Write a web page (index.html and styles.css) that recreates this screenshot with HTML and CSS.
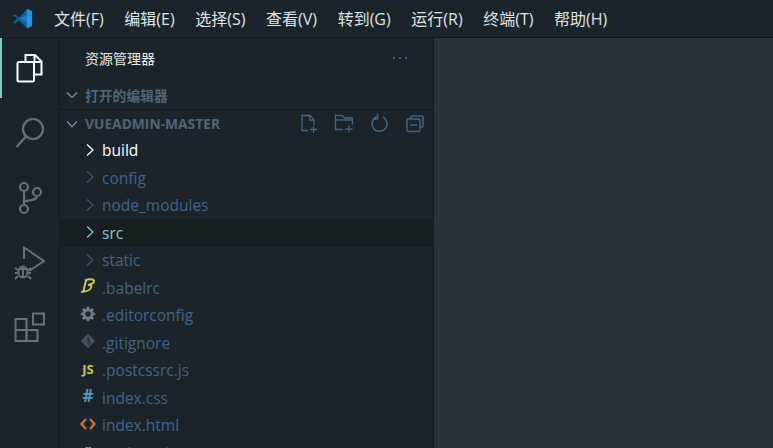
FILE: index.html
```html
<!DOCTYPE html>
<html lang="zh">
<head>
<meta charset="utf-8">
<title>VS Code</title>
<link rel="stylesheet" href="styles.css">
</head>
<body>
<header class="titlebar">
  <svg class="logo" viewBox="0 0 24 24" width="21" height="21">
    <path fill="#0065a9" d="M1.200 8.600 3 7l5 3.800L17.500.8l-.2 6.600-7 4.600 7 4.600.2 6.600L8 14.200l-5 3.800-1.800-1.600L5.800 12z"/>
    <path fill="#2489ca" d="M17 1.200 22.600 4v16L17 22.800z"/>
    <path fill="#1f9cf0" d="M17.500.8 23 3.500v17l-5.500 2.700V17L9.500 12l8-5z" opacity=".75"/>
  </svg>
  <nav class="menu">
    <span class="menu-item">文件(F)</span>
    <span class="menu-item">编辑(E)</span>
    <span class="menu-item">选择(S)</span>
    <span class="menu-item">查看(V)</span>
    <span class="menu-item">转到(G)</span>
    <span class="menu-item">运行(R)</span>
    <span class="menu-item">终端(T)</span>
    <span class="menu-item">帮助(H)</span>
  </nav>
</header>
<main class="workbench">
  <aside class="activity">
    <div class="act act-active">
      <svg viewBox="0 0 28 30" width="28" height="30" fill="none" stroke="#fff" stroke-width="2">
        <path d="M9.500 8V2h9.500l6.500 6.500V21.500H18"/>
        <path d="M18.500 2v7h7"/>
        <rect x="1.500" y="9" width="16.500" height="19.500" rx="1.500"/>
      </svg>
    </div>
    <div class="act">
      <svg viewBox="0 0 30 32" width="30" height="32" fill="none" stroke="#6a7074" stroke-width="2.200">
        <circle cx="18" cy="12" r="10"/>
        <path d="M11 19.500 1.500 30"/>
      </svg>
    </div>
    <div class="act">
      <svg viewBox="0 0 26 34" width="26" height="34" fill="none" stroke="#6a7074" stroke-width="2.200">
        <circle cx="7" cy="6" r="4"/>
        <circle cx="7" cy="28" r="4"/>
        <circle cx="20" cy="11" r="4"/>
        <path d="M7 10v14M7 22c0-4 13-1 13-7"/>
      </svg>
    </div>
    <div class="act">
      <svg viewBox="0 0 32 34" width="32" height="34" fill="none" stroke="#6a7074" stroke-width="2">
        <path d="M10 13V1.500L30 15 15 25"/>
        <ellipse cx="9" cy="26" rx="4.500" ry="5.500"/>
        <path d="M5 23h8M9 21v10M1 22l3 2M17 22l-3 2M1 27h3M14 27h3M1 33l3-3M17 33l-3-3"/>
      </svg>
    </div>
    <div class="act">
      <svg viewBox="0 0 32 32" width="32" height="32" fill="none" stroke="#6a7074" stroke-width="2">
        <rect x="1.500" y="7" width="11" height="11"/>
        <rect x="1.500" y="18" width="11" height="11"/>
        <rect x="12.500" y="18" width="11" height="11"/>
        <rect x="19" y="1.500" width="11" height="11"/>
      </svg>
    </div>
  </aside>
  <section class="sidebar">
    <div class="side-title">
      <span class="side-name">资源管理器</span>
      <svg class="more" viewBox="0 0 16 4" width="16" height="4"><path d="M1 1h2v2H1zM7 1h2v2H7zM13 1h2v2h-2z"/></svg>
    </div>
    <div class="sec sec-open">
      <svg class="chev" viewBox="0 0 16 16" width="16" height="16"><path d="M3 5.500 8 10.500 13 5.500" /></svg>
      <span>打开的编辑器</span>
    </div>
    <div class="sec sec-root">
      <svg class="chev" viewBox="0 0 16 16" width="16" height="16"><path d="M3 5.500 8 10.500 13 5.500" /></svg>
      <span class="root-name">VUEADMIN-MASTER</span>
      <div class="tools">
        <svg viewBox="0 0 20 20" width="20" height="20" fill="none" stroke="#41668a" stroke-width="1.300">
          <path d="M9 16.500H3V1.500h8l4 4V11M10.500 1.500V6H15M14.500 12v7M11 15.500h7"/>
        </svg>
        <svg viewBox="0 0 20 20" width="20" height="20" fill="none" stroke="#41668a" stroke-width="1.300">
          <path d="M9 15.500H1.500V1.500h7l2 2.500h8v6.500M1.500 6h17M15 11.500v7M11.500 15h7"/>
        </svg>
        <svg viewBox="0 0 20 20" width="20" height="20" fill="none" stroke="#41668a" stroke-width="1.500">
          <path d="M13 3.200a7.500 7.500 0 1 1-6.500-.2M7.500 0v5H3"/>
        </svg>
        <svg viewBox="0 0 20 20" width="20" height="20" fill="none" stroke="#41668a" stroke-width="1.500">
          <path d="M6 4.500V3a1 1 0 0 1 1-1h10a1 1 0 0 1 1 1v9a1 1 0 0 1-1 1h-2"/>
          <rect x="2" y="5" width="13" height="12.500" rx="1.500"/>
          <path d="M5 11h7"/>
        </svg>
      </div>
    </div>
    <ul class="tree">
      <li class="row row-white"><svg class="arrow" viewBox="0 0 10 14" width="10" height="14"><path d="M2 1.500 8 7 2 12.500"/></svg><span>build</span></li>
      <li class="row"><svg class="arrow" viewBox="0 0 10 14" width="10" height="14"><path d="M2 1.500 8 7 2 12.500"/></svg><span>config</span></li>
      <li class="row"><svg class="arrow" viewBox="0 0 10 14" width="10" height="14"><path d="M2 1.500 8 7 2 12.500"/></svg><span>node_modules</span></li>
      <li class="row row-sel"><svg class="arrow" viewBox="0 0 10 14" width="10" height="14"><path d="M2 1.500 8 7 2 12.500"/></svg><span>src</span></li>
      <li class="row"><svg class="arrow" viewBox="0 0 10 14" width="10" height="14"><path d="M2 1.500 8 7 2 12.500"/></svg><span>static</span></li>
      <li class="row file">
        <svg class="ficon" viewBox="0 0 16 16" width="16" height="16" fill="none" stroke="#cbcb41" stroke-width="2"><path d="M5 2.500c3-1.500 9-2 9 .5 0 2-3 3.500-6 4.200 3-.5 4 .8 3 2.800-1 2.500-5 3.500-10 4M6 2.500 3 14.500"/></svg>
        <span>.babelrc</span>
      </li>
      <li class="row file">
        <svg class="ficon" viewBox="0 0 16 16" width="16" height="16"><circle cx="8" cy="8" r="4.200" fill="none" stroke="#6d8086" stroke-width="3"/><path stroke="#6d8086" stroke-width="2.600" d="M8 .8v3M8 12.200v3M.8 8h3M12.200 8h3M2.900 2.900l2.100 2.100M11 11l2.100 2.100M2.900 13.100 5 11M11 5l2.100-2.100"/></svg>
        <span>.editorconfig</span>
      </li>
      <li class="row file">
        <svg class="ficon" viewBox="0 0 16 16" width="16" height="16"><path fill="#41535b" d="M8 .800 15.200 8 8 15.200.8 8z"/><path fill="#1b242a" d="M7 3.500 9.500 6v1.500L11 9.500 8 12.500z" opacity=".6"/></svg>
        <span>.gitignore</span>
      </li>
      <li class="row file">
        <span class="ficon glyph js">JS</span>
        <span>.postcssrc.js</span>
      </li>
      <li class="row file">
        <span class="ficon glyph hash">#</span>
        <span>index.css</span>
      </li>
      <li class="row file">
        <svg class="ficon" viewBox="0 0 16 16" width="16" height="16" fill="none" stroke="#e37933" stroke-width="2"><path d="M6 3 1.500 8 6 13M10 3l4.500 5L10 13"/></svg>
        <span>index.html</span>
      </li>
      <li class="row file">
        <span class="ficon glyph json">{}</span>
        <span>package.json</span>
      </li>
    </ul>
  </section>
  <div class="editor"></div>
</main>
</body>
</html>
```

FILE: styles.css
```css
* { box-sizing: border-box; }
html, body { margin: 0; padding: 0; height: 100%; overflow: hidden; }
body {
  width: 773px;
  height: 448px;
  display: flex;
  flex-direction: column;
  background: #1b242a;
  font-family: "Open Sans", "Noto Sans CJK SC", sans-serif;
  color: #d9dfe2;
}
.titlebar {
  height: 38px;
  flex: none;
  display: flex;
  align-items: center;
  background: #1b242a;
  border-bottom: 1px solid #12191d;
  padding-left: 12px;
}
.logo { flex: none; margin-bottom: 1px; }
.menu { display: flex; margin-left: 21px; gap: 20.600px; }
.menu-item { font-size: 16px; color: #dfe5e7; line-height: 20px; white-space: nowrap; }
.workbench { flex: 1; display: flex; min-height: 0; }
.activity {
  width: 60px;
  flex: none;
  display: flex;
  flex-direction: column;
  background: #1b242a;
  border-right: 1px solid #12191d;
}
.act {
  height: 65px;
  flex: none;
  display: flex;
  align-items: center;
  justify-content: center;
}
.act-active { height: 60px; margin-bottom: 2.500px; box-shadow: inset 2px 0 0 #80cbc4; }
.sidebar {
  width: 374px;
  flex: none;
  display: flex;
  flex-direction: column;
  background: #1b242a;
  border-right: 1px solid #12191d;
  overflow: hidden;
}
.side-title {
  height: 44px;
  flex: none;
  display: flex;
  align-items: center;
  padding: 0 25px 4px 25px;
  justify-content: space-between;
}
.side-name { font-size: 14px; color: #e8eaeb; }
.more { flex: none; fill: #41668a; }
.sec {
  flex: none;
  display: flex;
  align-items: center;
  color: #4e6679;
  font-size: 13.800px;
  font-weight: 700;
  padding-left: 4px;
}
.sec-open { height: 28px; padding-bottom: 2px; border-bottom: 1px solid #12191d; }
.sec-root { height: 26.500px; padding-top: 1px; }
.chev { flex: none; fill: none; stroke: #7a8f9b; stroke-width: 1.300; margin-right: 5px; }
.root-name { flex: 1; }
.tools { display: flex; gap: 15.500px; padding-right: 8px; align-items: center; }
.tree { list-style: none; margin: 0; padding: 0; }
.row {
  height: 27.500px;
  display: flex;
  align-items: center;
  padding-left: 25px;
  font-size: 15.500px;
  color: #41668a;
  white-space: nowrap;
}
.arrow { flex: none; fill: none; stroke: #41586c; stroke-width: 1.300; margin-right: 7px; margin-bottom: 1px; }
.row-white { color: #fff; }
.row-white .arrow { stroke: #fff; }
.row-sel { color: #80cbc4; background: #161e22; }
.row-sel .arrow { stroke: #80cbc4; }
.file { padding-left: 20px; }
.ficon { flex: none; width: 16px; height: 16px; margin-right: 6px; margin-top: -3px; }
.glyph {
  display: flex;
  align-items: center;
  justify-content: center;
  font-weight: 700;
  font-size: 13px;
  line-height: 16px;
}
.js { color: #cbcb41; font-size: 13px; }
.hash { color: #519aba; font-size: 17px; }
.json { color: #cbcb41; }
.editor { flex: 1; background: #293339; }
```
